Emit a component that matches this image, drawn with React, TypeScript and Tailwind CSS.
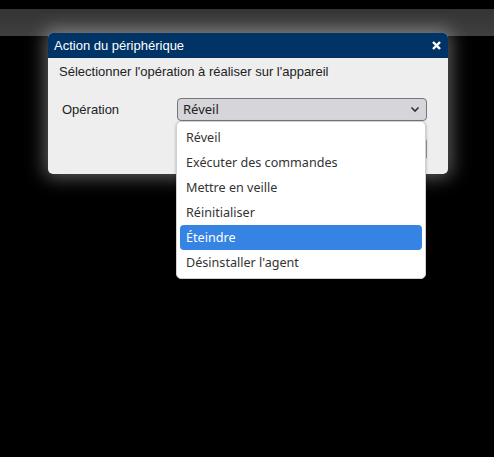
import React from 'react';

const options = [
  'Réveil',
  'Exécuter des commandes',
  'Mettre en veille',
  'Réinitialiser',
  'Éteindre',
  "Désinstaller l'agent",
];

const App: React.FC = () => {
  const active = 'Éteindre';

  return (
    <div className="w-[494px] h-[457px] bg-black overflow-hidden relative font-['Liberation_Sans',Arial,sans-serif]">
      {/* Toolbar behind the overlay */}
      <div className="mt-[9px] h-[27px] bg-gradient-to-b from-[#343434] to-[#3f3f3f]" />

      {/* Dialog */}
      <div className="absolute left-[48px] top-[33px] w-[400px] rounded-[5px] bg-[#eeeeee] shadow-[0_0_18px_4px_rgba(255,255,255,0.35)]">
        <div className="h-[25px] rounded-t-[5px] bg-[#003366] flex items-center justify-between pl-[6px] pr-[7px]">
          <span className="text-[13px] text-white">Action du périphérique</span>
          <svg width="9" height="9" viewBox="0 0 10 10">
            <path d="M2 2 L8 8 M8 2 L2 8" stroke="#fff" strokeWidth="2.6" strokeLinecap="square" />
          </svg>
        </div>

        <div className="px-[11px] pt-[6px] pb-[14px]">
          <p className="text-[13px] text-[#222] leading-[16px]">Sélectionner l'opération à réaliser sur l'appareil</p>

          <div className="mt-[18px] flex items-center">
            <label className="w-[118px] pl-[3px] text-[13px] text-[#222]">Opération</label>
            <div className="w-[250px] h-[23px] rounded-[4px] border border-[#77777b] bg-[#d5d5da] flex items-center justify-between pl-[5px] pr-[6px]">
              <span className="text-[13px] text-[#222] font-['Noto_Sans',sans-serif]">Réveil</span>
              <svg width="10" height="7" viewBox="0 0 10 7">
                <path d="M1.5 1.5 L5 5 L8.5 1.5" stroke="#333" strokeWidth="1.6" fill="none" />
              </svg>
            </div>
          </div>

          <div className="mt-[17px] flex justify-end pr-[10px]">
            <button className="w-[90px] h-[22px] rounded-[3px] border border-[#999] bg-[#f4f4f4] text-[13px]" />
          </div>
        </div>
      </div>

      {/* Open select list */}
      <div className="absolute left-[176px] top-[121px] w-[250px] rounded-[5px] bg-white border border-[#d0d0d0] pt-[3px] pb-[3px] px-[3px] shadow-[0_1px_3px_rgba(0,0,0,0.3)] font-['Noto_Sans',sans-serif]">
        {options.map((o) => (
          <div
            key={o}
            className={
              o === active
                ? 'h-[25px] rounded-[4px] bg-[#3584e4] text-white text-[12.6px] flex items-center pl-[6px] pt-[1px]'
                : 'h-[25px] text-[#333] text-[12.6px] flex items-center pl-[6px] pt-[1px]'
            }
          >
            {o}
          </div>
        ))}
      </div>
    </div>
  );
};

export default App;
